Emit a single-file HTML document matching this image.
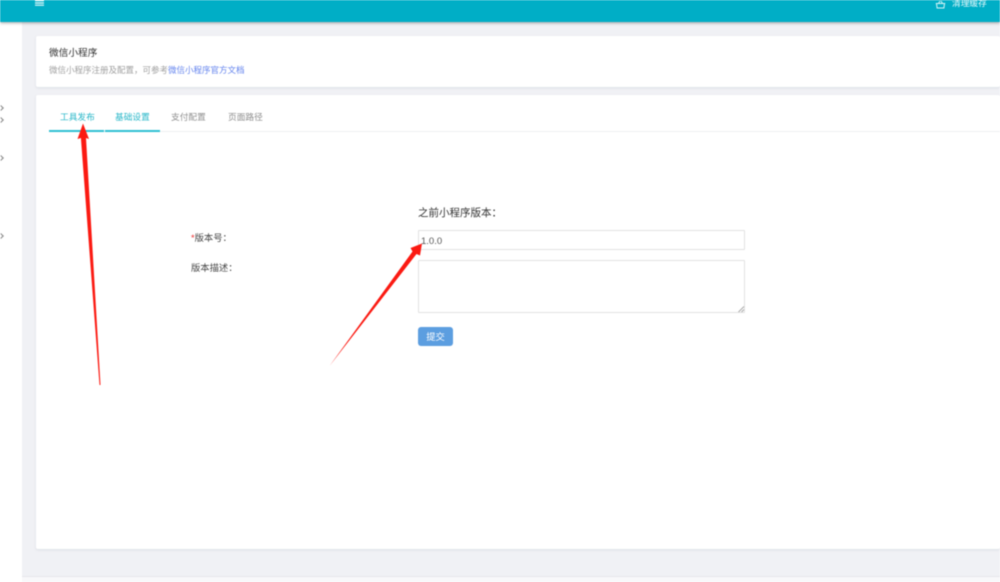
<!DOCTYPE html>
<html lang="zh">
<head>
<meta charset="utf-8">
<style>
html,body{margin:0;padding:0;width:1000px;height:582px;overflow:hidden;background:#fff;font-family:"Liberation Sans","Noto Sans CJK SC",sans-serif}
*{box-sizing:border-box}
#wrap{position:absolute;left:0;top:0;width:1000px;height:582px;overflow:hidden;filter:blur(.4px)}
.a{position:absolute;white-space:nowrap}
#bg{left:22px;top:22px;width:978px;height:560px;background:#f0f1f5}
#foot{left:22px;top:576px;width:978px;height:1px;background:#e6e7eb}
#foot2{left:22px;top:577px;width:978px;height:5px;background:#f8f8fa}
#head{left:0;top:0;width:1000px;height:22px;background:#00aec6;box-shadow:0 1px 3px rgba(0,0,0,.35)}
.card{background:#fff;border-radius:2px;box-shadow:0 1px 2px rgba(200,205,215,.5)}
#c1{left:36px;top:36px;width:964px;height:51px}
#c2{left:36px;top:95px;width:964px;height:454px}
.tab{font-size:8.7px;line-height:12px;top:111px;color:#8f8f8f}
.line{height:1.5px;top:130px;background:#2fc0d2}
.chev{width:4px;height:4px;border-top:1px solid #888;border-right:1px solid #888;transform:rotate(45deg);left:-1px}
</style>
</head>
<body>
<div id="wrap">
<div class="a" id="bg"></div>
<div class="a" id="foot"></div>
<div class="a" id="foot2"></div>

<div class="a chev" style="top:106px"></div>
<div class="a chev" style="top:118px"></div>
<div class="a chev" style="top:156px"></div>
<div class="a chev" style="top:234px"></div>

<div class="a" id="head"></div>
<svg class="a" style="left:35px;top:0" width="9" height="6" viewBox="0 0 9 6"><path d="M0 0h9v1.2H0zM0 2.4h9v1.2H0zM0 4.6h9v1.2H0z" fill="#e6f9fb"/></svg>
<svg class="a" style="left:935px;top:0" width="11" height="9" viewBox="0 0 11 9"><path d="M1.5 3.5h8l-.6 4.5H2.100zM0.800 3.500h9.400M3.500 3.500L5 1M7.500 3.500L6 1" fill="none" stroke="#d8f5f8" stroke-width="1"/></svg>
<div class="a" style="left:952px;top:-3px;font-size:8.700px;line-height:12px;color:#e8fafc">清理缓存</div>

<div class="a card" id="c1"></div>
<div class="a" style="left:49px;top:46.500px;font-size:9.700px;line-height:13px;color:#333">微信小程序</div>
<div class="a" style="left:49px;top:64px;font-size:8.500px;line-height:13px;color:#a0a0a0">微信小程序注册及配置，可参考<span style="color:#6484ee">微信小程序官方文档</span></div>

<div class="a card" id="c2"></div>
<div class="a" style="left:49px;top:131px;width:951px;height:1px;background:#eef0f2"></div>
<div class="a tab" style="left:60px;color:#25b6c8">工具发布</div>
<div class="a tab" style="left:115px;color:#25b6c8">基础设置</div>
<div class="a tab" style="left:171px">支付配置</div>
<div class="a tab" style="left:228px">页面路径</div>
<div class="a line" style="left:49px;width:55px"></div>
<div class="a line" style="left:105px;width:55px"></div>

<div class="a" style="left:418px;top:206px;font-size:10.500px;line-height:14px;color:#333">之前小程序版本：</div>
<div class="a" style="left:191px;top:231.500px;font-size:9.300px;line-height:13px;color:#444"><span style="color:#e33">*</span>版本号：</div>
<div class="a" style="left:191px;top:261.500px;font-size:9.300px;line-height:13px;color:#444">版本描述：</div>

<div class="a" style="left:418px;top:230px;width:327px;height:20px;border:1px solid #e2e2e2;border-radius:1px"></div>
<div class="a" style="left:421px;top:235px;font-size:9.500px;line-height:13px;color:#555">1.0.0</div>
<div class="a" style="left:418px;top:260px;width:327px;height:53px;border:1px solid #e2e2e2;border-radius:1px"></div>
<svg class="a" style="left:737px;top:305px" width="8" height="8" viewBox="0 0 8 8"><path d="M7 1.500L1.500 7M7 4.500L4.500 7" stroke="#aaa" stroke-width="1" fill="none"/></svg>

<div class="a" style="left:418px;top:327px;width:35px;height:19px;background:#5c9ee0;border-radius:3px;color:#fff;font-size:9.300px;line-height:20px;text-align:center">提交</div>

<svg class="a" style="left:0;top:0" width="1000" height="582" viewBox="0 0 1000 582">
<path d="M100.500 385L99.500 385L80.900 138L77.500 139L83 123.500L89 139L86 138Z" fill="#fb1a12"/>
<path d="M328.500 365.500L329.500 366L412.500 251.500L410.500 248L422 243.500L420 255.500L416.500 254L329.500 366Z" fill="#fb1a12"/>
</svg>
</div>
</body>
</html>
